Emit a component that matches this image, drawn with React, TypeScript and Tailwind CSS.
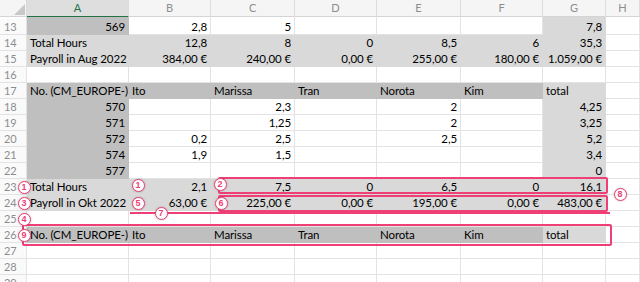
import React from "react";

type Cell = { t?: string; r?: boolean; bg?: "d" | "l" };

const D = "d";
const L = "l";

const rows: { n: number; cells: Cell[] }[] = [
  { n: 13, cells: [{ t: "569", r: true, bg: D }, { t: "2,8", r: true }, { t: "5", r: true }, {}, {}, {}, { t: "7,8", r: true, bg: L }, {}] },
  { n: 14, cells: [{ t: "Total Hours", bg: L }, { t: "12,8", r: true, bg: L }, { t: "8", r: true, bg: L }, { t: "0", r: true, bg: L }, { t: "8,5", r: true, bg: L }, { t: "6", r: true, bg: L }, { t: "35,3", r: true, bg: L }, {}] },
  { n: 15, cells: [{ t: "Payroll in Aug 2022", bg: L }, { t: "384,00 €", r: true, bg: L }, { t: "240,00 €", r: true, bg: L }, { t: "0,00 €", r: true, bg: L }, { t: "255,00 €", r: true, bg: L }, { t: "180,00 €", r: true, bg: L }, { t: "1.059,00 €", r: true, bg: L }, {}] },
  { n: 16, cells: [{}, {}, {}, {}, {}, {}, {}, {}] },
  { n: 17, cells: [{ t: "No. (CM_EUROPE-)", bg: D }, { t: "Ito", bg: D }, { t: "Marissa", bg: D }, { t: "Tran", bg: D }, { t: "Norota", bg: D }, { t: "Kim", bg: D }, { t: "total", bg: L }, {}] },
  { n: 18, cells: [{ t: "570", r: true, bg: D }, {}, { t: "2,3", r: true }, {}, { t: "2", r: true }, {}, { t: "4,25", r: true, bg: L }, {}] },
  { n: 19, cells: [{ t: "571", r: true, bg: D }, {}, { t: "1,25", r: true }, {}, { t: "2", r: true }, {}, { t: "3,25", r: true, bg: L }, {}] },
  { n: 20, cells: [{ t: "572", r: true, bg: D }, { t: "0,2", r: true }, { t: "2,5", r: true }, {}, { t: "2,5", r: true }, {}, { t: "5,2", r: true, bg: L }, {}] },
  { n: 21, cells: [{ t: "574", r: true, bg: D }, { t: "1,9", r: true }, { t: "1,5", r: true }, {}, {}, {}, { t: "3,4", r: true, bg: L }, {}] },
  { n: 22, cells: [{ t: "577", r: true, bg: D }, {}, {}, {}, {}, {}, { t: "0", r: true, bg: L }, {}] },
  { n: 23, cells: [{ t: "Total Hours", bg: L }, { t: "2,1", r: true, bg: L }, { t: "7,5", r: true, bg: L }, { t: "0", r: true, bg: L }, { t: "6,5", r: true, bg: L }, { t: "0", r: true, bg: L }, { t: "16,1", r: true, bg: L }, {}] },
  { n: 24, cells: [{ t: "Payroll in Okt 2022", bg: L }, { t: "63,00 €", r: true, bg: L }, { t: "225,00 €", r: true, bg: L }, { t: "0,00 €", r: true, bg: L }, { t: "195,00 €", r: true, bg: L }, { t: "0,00 €", r: true, bg: L }, { t: "483,00 €", r: true, bg: L }, {}] },
  { n: 25, cells: [{}, {}, {}, {}, {}, {}, {}, {}] },
  { n: 26, cells: [{ t: "No. (CM_EUROPE-)", bg: D }, { t: "Ito", bg: D }, { t: "Marissa", bg: D }, { t: "Tran", bg: D }, { t: "Norota", bg: D }, { t: "Kim", bg: D }, { t: "total", bg: L }, {}] },
  { n: 27, cells: [{}, {}, {}, {}, {}, {}, {}, {}] },
  { n: 28, cells: [{}, {}, {}, {}, {}, {}, {}, {}] },
  { n: 29, cells: [{}, {}, {}, {}, {}, {}, {}, {}] },
];

const GRID = "grid grid-cols-[27px_102px_82px_84px_82px_84px_82px_63px_1fr]";

function CellView({ c }: { c: Cell }) {
  const bg =
    c.bg === "d"
      ? "bg-[#bfbfbf] border-transparent"
      : c.bg === "l"
      ? "bg-[#d9d9d9] border-transparent"
      : "bg-white border-[#e3e3e3]";
  return (
    <div
      className={`${bg} border-r border-b h-[16px] leading-[15px] overflow-hidden whitespace-nowrap px-[3px] ${
        c.r ? "text-right" : "text-left"
      }`}
    >
      {c.t}
    </div>
  );
}

function Mark({ n, x, y }: { n: string; x: number; y: number }) {
  return (
    <div
      className="absolute w-[13px] h-[13px] rounded-full bg-white border-[1.5px] border-[#ee3f76] text-[#ee3f76] text-[9px] font-bold flex items-center justify-center leading-none shadow-[0_0_2px_rgba(0,0,0,0.3)]"
      style={{ left: x - 6.5, top: y - 6.5, fontFamily: "'Liberation Sans', sans-serif" }}
    >
      {n}
    </div>
  );
}

export default function App() {
  const letters = ["A", "B", "C", "D", "E", "F", "G", "H"];
  return (
    <div
      className="relative w-[640px] h-[282px] overflow-hidden bg-white text-[11.5px] text-black"
      style={{ fontFamily: "Lato, 'Liberation Sans', sans-serif", letterSpacing: "-0.1px" }}
    >
      {/* column header */}
      <div className={`${GRID} h-[17px] bg-[#f5f5f5] border-b border-[#d4d4d4]`}>
        <div className="relative border-r border-[#d9d9d9]">
          <svg className="absolute left-[14px] top-[4px]" width="11" height="11" viewBox="0 0 11 11">
            <polygon points="11,0 11,11 0,11" fill="#c8c8c8" />
          </svg>
        </div>
        {letters.map((l, i) => (
          <div
            key={l}
            className={`text-center leading-[16px] text-[11px] border-r border-[#dcdcdc] ${
              i === 0 ? "bg-[#dedede] text-[#217346] border-b-2 border-b-[#217346]" : "text-[#8d8d8d]"
            }`}
          >
            {l}
          </div>
        ))}
      </div>
      {/* row 12 tail */}
      <div className={`${GRID} h-[2px]`}>
        <div className="bg-white border-r border-[#dcdcdc]" />
        <div className="bg-[#bfbfbf]" />
        <div className="border-r border-[#e3e3e3]" />
        <div className="border-r border-[#e3e3e3]" />
        <div className="border-r border-[#e3e3e3]" />
        <div className="border-r border-[#e3e3e3]" />
        <div className="border-r border-[#e3e3e3]" />
        <div className="bg-[#d9d9d9]" />
        <div />
      </div>
      {rows.map((row) => (
        <div key={row.n} className={GRID}>
          <div className="h-[16px] leading-[15px] pl-[4px] text-[11px] text-[#8d8d8d] bg-[#fafafa] border-r border-b border-[#e3e3e3]">
            {row.n}
          </div>
          {row.cells.map((c, i) => (
            <CellView key={i} c={c} />
          ))}
        </div>
      ))}

      {/* annotations */}
      <div className="absolute left-[218px] top-[177px] w-[390px] h-[17px] border-2 border-[#ee3f76] rounded-[2px]" />
      <div className="absolute left-[218px] top-[195px] w-[390px] h-[17px] border-2 border-[#ee3f76] rounded-[2px]" />
      <div className="absolute left-[130px] top-[212px] w-[480px] h-[2px] bg-[#ee3f76]" />
      <div className="absolute left-[22px] top-[224px] w-[590px] h-[22px] border-2 border-[#ee3f76] rounded-[2px]" />

      <Mark n="1" x={24} y={187} />
      <Mark n="3" x={24} y={203} />
      <Mark n="4" x={24} y={219} />
      <Mark n="9" x={24} y={235} />
      <Mark n="1" x={138} y={185} />
      <Mark n="5" x={138} y={203} />
      <Mark n="2" x={220} y={184} />
      <Mark n="6" x={221} y={203} />
      <Mark n="7" x={161} y={213} />
      <Mark n="8" x={620} y={194} />
    </div>
  );
}
